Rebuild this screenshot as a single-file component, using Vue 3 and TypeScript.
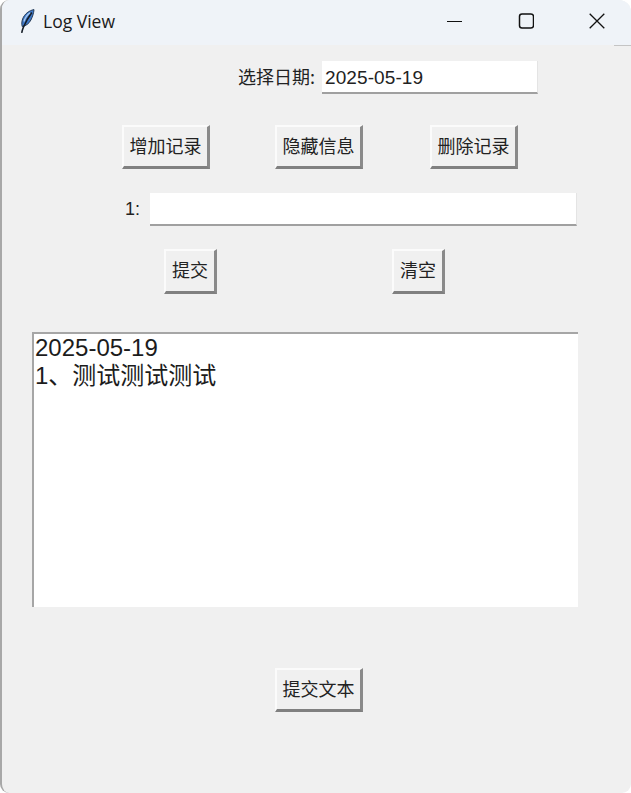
<script setup lang="ts">
const actions: string[] = ['增加记录', '隐藏信息', '删除记录']
const lines: string[] = ['2025-05-19', '1、测试测试测试']
</script>

<template>
  <div class="window">
    <header class="titlebar">
      <svg class="feather" viewBox="0 0 16 24" width="16" height="24" aria-hidden="true">
        <path d="M15 .6C10 1.500 5.500 5 3.600 10c-1 2.800-1 5.300-.4 7.500 3.600-.5 6.800-2.800 8.700-6.500C13.600 7.700 14.700 4.200 15 .6z" fill="#3e78c8" stroke="#263c58" stroke-width="1" />
        <path d="M12.800 3.500C9.500 8 6.500 13 4.500 18 3.700 20 3.100 22 2.700 23.800" fill="none" stroke="#141c26" stroke-width="1.600" />
        <path d="M11 3.800C8 6 6 9 5 12.500" fill="none" stroke="#a9caf2" stroke-width="1.300" />
      </svg>
      <span class="title">Log View</span>
      <div class="controls">
        <svg viewBox="0 0 16 16" width="16" height="16" aria-hidden="true"><path d="M0 8.500h15" stroke="#111" stroke-width="1" /></svg>
        <svg viewBox="0 0 16 16" width="16" height="16" aria-hidden="true"><rect x="1.500" y="1" width="14" height="14" rx="2.500" fill="none" stroke="#111" stroke-width="1.500" /></svg>
        <svg viewBox="0 0 16 16" width="16" height="16" aria-hidden="true"><path d="M.7.700l14.600 14.600M15.300.700L.7 15.300" stroke="#111" stroke-width="1.300" fill="none" /></svg>
      </div>
    </header>

    <main class="content">
      <div class="date-row">
        <label class="label">选择日期:</label>
        <div class="entry date-entry">2025-05-19</div>
      </div>

      <div class="action-row">
        <button v-for="a in actions" :key="a" class="btn wide" type="button">{{ a }}</button>
      </div>

      <div class="record-row">
        <label class="label">1:</label>
        <div class="entry record-entry"></div>
      </div>

      <div class="submit-row">
        <button class="btn narrow" type="button">提交</button>
        <button class="btn narrow" type="button">清空</button>
      </div>

      <div class="log">
        <div v-for="l in lines" :key="l">{{ l }}</div>
      </div>

      <div class="final-row">
        <button class="btn wide" type="button">提交文本</button>
      </div>
    </main>
  </div>
</template>

<style scoped>
.window {
  width: 631px;
  height: 793px;
  box-sizing: border-box;
  display: flex;
  flex-direction: column;
  overflow: hidden;
  background: #f0f0f0;
  border-left: 2px solid #a8a8a8;
  border-radius: 9px 12px 9px 9px;
  font-family: "Noto Sans CJK SC", "Noto Sans", sans-serif;
  color: #222;
}
.titlebar {
  position: relative;
  height: 45px;
  flex: none;
  display: flex;
  align-items: center;
  background: #eff3f8;
  padding: 0 26px 3px 17px;
  box-sizing: border-box;
}
.titlebar::after {
  content: "";
  position: absolute;
  right: 0;
  bottom: -1px;
  width: 17px;
  height: 1px;
  background: #c4c4c4;
}
.feather {
  flex: none;
  margin-right: 8px;
}
.title {
  font-family: "Open Sans", "Noto Sans", sans-serif;
  font-size: 17.5px;
  color: #1a1a1a;
}
.controls {
  margin-left: auto;
  display: flex;
  align-items: center;
  gap: 55px;
}
.content {
  flex: 1;
  display: flex;
  flex-direction: column;
}
.label {
  font-size: 18px;
  line-height: 24px;
}
.entry {
  box-sizing: border-box;
  background: #fff;
  border-bottom: 2px solid #a0a0a0;
  border-right: 1px solid #e4e4e4;
}
.date-row {
  display: flex;
  align-items: center;
  height: 33px;
  margin-top: 16px;
  padding-left: 236px;
  gap: 6px;
}
.date-row .label {
  width: 78px;
  white-space: nowrap;
  padding-bottom: 4px;
}
.date-entry {
  width: 216px;
  height: 33px;
  padding-left: 3px;
  font-family: "Liberation Sans", sans-serif;
  font-size: 19px;
  line-height: 33px;
  letter-spacing: 0.1px;
}
.action-row {
  display: grid;
  grid-template-columns: 153px 155px 88px;
  margin-top: 31px;
  padding-left: 120px;
}
.btn {
  box-sizing: border-box;
  height: 44px;
  padding: 0 0 4px;
  background: #f0f0f0;
  border: 0;
  border-top: 2px solid #fbfbfb;
  border-left: 2px solid #fbfbfb;
  border-right: 3px solid #8a8a8a;
  border-bottom: 3px solid #808080;
  font-family: inherit;
  font-size: 18px;
  line-height: 24px;
  color: #222;
}
.wide {
  width: 88px;
}
.narrow {
  width: 53px;
  height: 45px;
}
.record-row {
  display: flex;
  align-items: center;
  height: 33px;
  margin-top: 24px;
  padding-left: 123px;
}
.record-row .label {
  width: 25px;
  font-family: "Liberation Sans", sans-serif;
  font-size: 18px;
  padding-bottom: 2px;
}
.record-entry {
  width: 427px;
  height: 33px;
}
.submit-row {
  display: flex;
  margin-top: 23px;
  padding-left: 162px;
  gap: 175px;
}
.log {
  box-sizing: border-box;
  width: 546px;
  height: 275px;
  margin: 38px 0 0 30px;
  padding: 0 0 0 1px;
  background: #fff;
  border-top: 2px solid #a6a6a6;
  border-left: 2px solid #a6a6a6;
  font-family: "Liberation Sans", "Noto Sans CJK SC", sans-serif;
  font-size: 24px;
  line-height: 28px;
  color: #1c1c1c;
}
.final-row {
  margin-top: 61px;
  padding-left: 273px;
}
</style>
